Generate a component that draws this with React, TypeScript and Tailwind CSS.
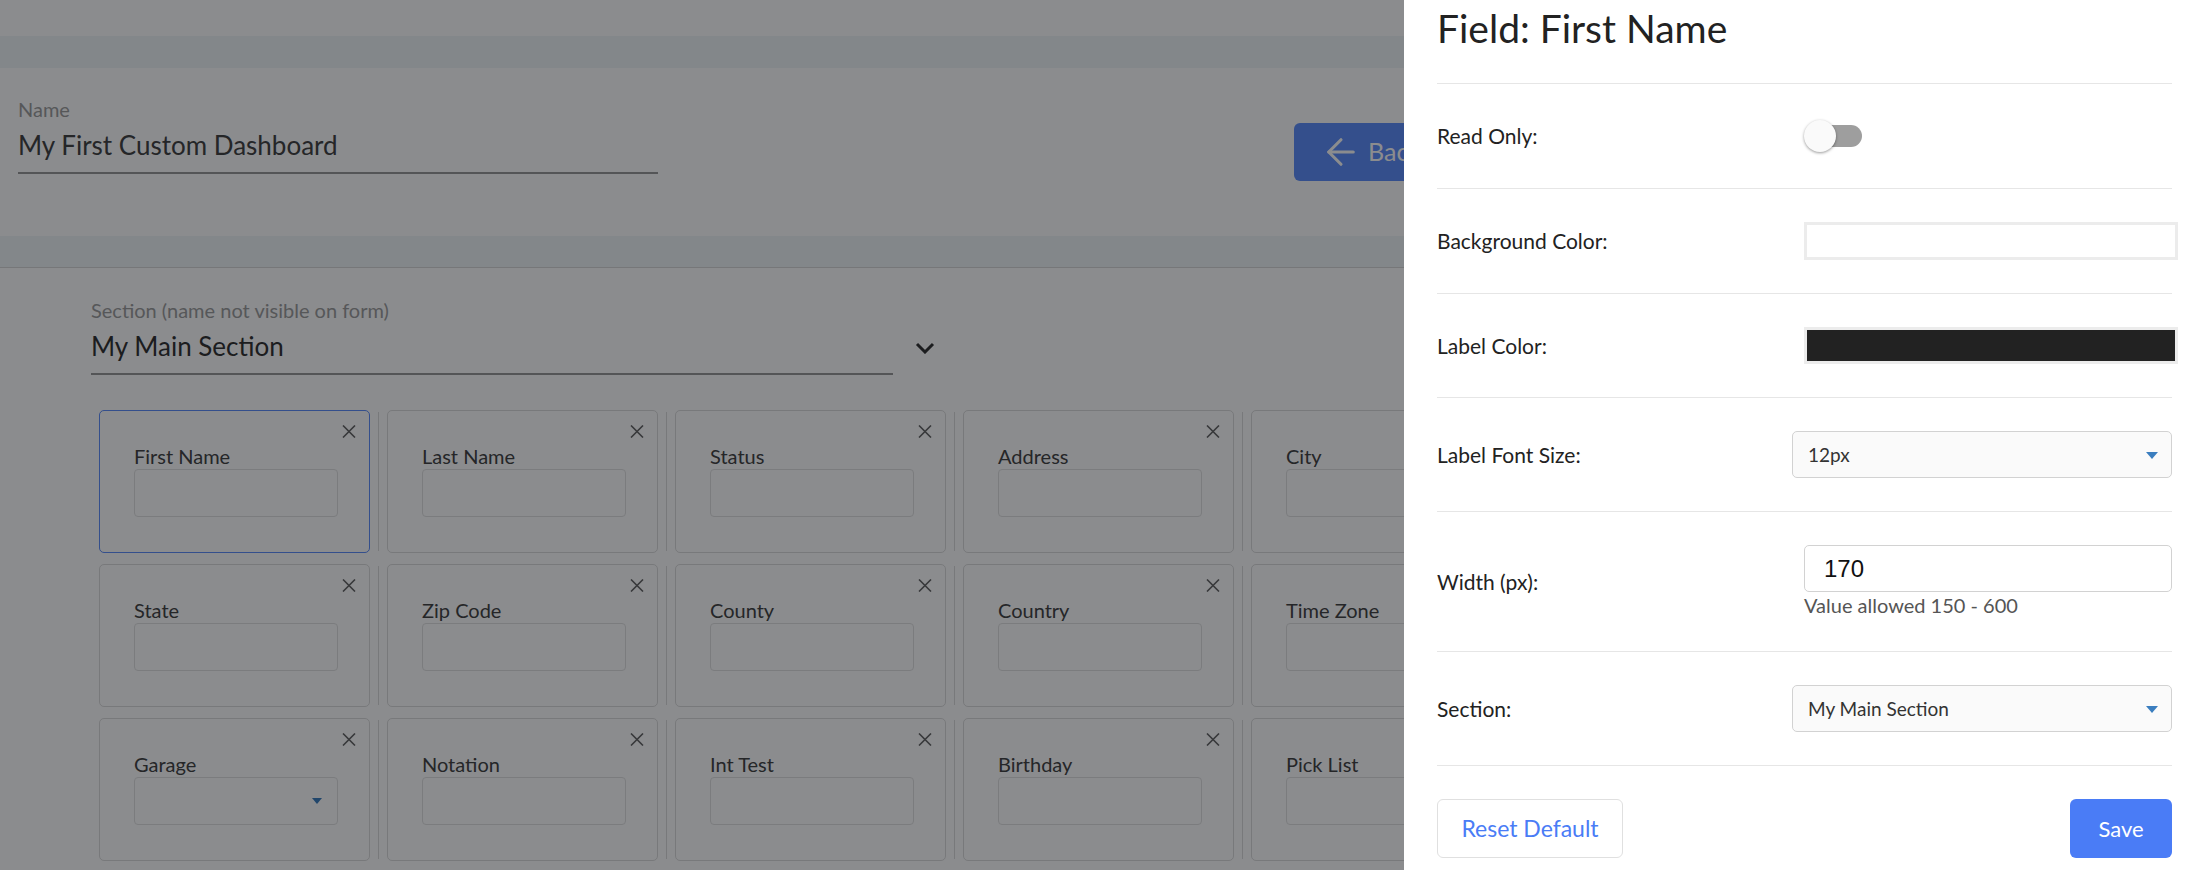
import { ArrowLeft } from "lucide-react";

const rows = [
  ["First Name", "Last Name", "Status", "Address", "City"],
  ["State", "Zip Code", "County", "Country", "Time Zone"],
  ["Garage", "Notation", "Int Test", "Birthday", "Pick List"],
];

function CloseX() {
  return (
    <svg width="14" height="13" viewBox="0 0 14 13" className="absolute right-[13px] top-[14px]">
      <path d="M1 0.5 L13 12.5 M13 0.5 L1 12.5" stroke="#666" strokeWidth="1.6" fill="none" />
    </svg>
  );
}

function Triangle({ className }: { className?: string }) {
  return (
    <svg width="12" height="7" viewBox="0 0 12 7" className={className}>
      <path d="M0 0 H12 L6 7 Z" fill="#3b7ebf" />
    </svg>
  );
}

function FieldCard({ label, selected, dropdown }: { label: string; selected?: boolean; dropdown?: boolean }) {
  return (
    <div
      className={
        "relative h-[143px] w-[271px] shrink-0 rounded-[5px] border bg-white pl-[34px] pt-[32px] " +
        (selected ? "border-[#5e8efc]" : "border-[#dcdcdc]")
      }
    >
      <CloseX />
      <div className="text-[20px] leading-[26px] text-[#444]">{label}</div>
      <div className="relative h-[48px] w-[204px] rounded-[4px] border border-[#e2e2e2]">
        {dropdown && <Triangle className="absolute right-[15px] top-[20px] h-[6px] w-[10px]" />}
      </div>
    </div>
  );
}

function Row({ label, children, last }: { label: string; children: React.ReactNode; last?: boolean }) {
  return (
    <div className={"flex items-center py-[33px] " + (last ? "" : "border-b border-[#e6e6e6]")}>
      <div className="w-[355px] shrink-0 text-[21px] text-[#222]">{label}</div>
      <div className="flex-1">{children}</div>
    </div>
  );
}

function SelectBox({ value }: { value: string }) {
  return (
    <div className="flex h-[47px] w-[380px] items-center justify-between rounded-[5px] border border-[#d2d2d2] bg-[#fafafa] pl-[15px] pr-[13px] pt-[2px] text-[19px] text-[#333]">
      <span>{value}</span>
      <Triangle />
    </div>
  );
}

export default function App() {
  return (
    <div className="relative h-[870px] w-[2190px] overflow-hidden bg-white font-['Lato',sans-serif]">
      {/* page under the overlay */}
      <div className="h-[36px] bg-white" />
      <div className="h-[32px] bg-[#f0f5f8]" />
      <div className="flex h-[168px] items-start pl-[18px]">
        <div className="w-[640px] pt-[29px]">
          <div className="text-[20px] leading-[25px] text-[#9e9e9e]">Name</div>
          <div className="mt-[7px] border-b-2 border-[#9a9a9a] pb-[10px] text-[26px] leading-[33px] text-[#444]">
            My First Custom Dashboard
          </div>
        </div>
        <button className="ml-[636px] mt-[55px] flex h-[58px] items-center gap-[6px] rounded-[6px] bg-[#5e8efc] pl-[26px] pr-[40px] text-[25px] text-white">
          <ArrowLeft className="h-[42px] w-[42px]" strokeWidth={1.8} />
          Back
        </button>
      </div>
      <div className="h-[32px] border-b border-[#d8d8d8] bg-[#f0f5f8]" />

      <div className="pl-[91px] pt-[30px]">
        <div className="text-[20px] leading-[25px] text-[#9e9e9e]">Section (name not visible on form)</div>
        <div className="mt-[6px] flex items-center gap-[22px]">
          <div className="w-[802px] border-b-2 border-[#9a9a9a] pb-[10px] text-[26px] leading-[34px] text-[#333]">
            My Main Section
          </div>
          <svg width="20" height="12" viewBox="0 0 20 12" className="mt-[-8px]">
            <path d="M2 2 L10 10 L18 2" stroke="#333" strokeWidth="3" fill="none" />
          </svg>
        </div>

        <div className="ml-[8px] mt-[35px] flex flex-col gap-y-[11px]">
          {rows.map((row, r) => (
            <div key={r} className="flex">
              {row.map((label, i) => (
                <div key={label} className="flex">
                  <FieldCard label={label} selected={r === 0 && i === 0} dropdown={label === "Garage"} />
                  <div className="mx-[8px] my-[2px] w-px self-stretch bg-[#dcdcdc]" />
                </div>
              ))}
            </div>
          ))}
        </div>
      </div>

      {/* dim overlay */}
      <div className="absolute inset-0 bg-[rgba(3,5,9,0.46)]" />

      {/* field settings drawer */}
      <aside className="absolute right-0 top-0 h-full w-[786px] bg-white pl-[33px] pr-[18px]">
        <div className="h-[84px] border-b border-[#e6e6e6] pt-[9px] text-[39px] leading-none text-[#222]">
          Field: First Name
        </div>

        <Row label="Read Only:">
          <div className="flex h-[38px] items-center pl-[12px]">
            <div className="relative h-[22px] w-[58px]">
              <div className="absolute left-[4px] top-0 h-[22px] w-[54px] rounded-full bg-[#9e9e9e]" />
              <div className="absolute left-0 top-[-5px] h-[32px] w-[32px] rounded-full bg-[#fafafa] shadow-[0_1px_3px_rgba(0,0,0,0.4)]" />
            </div>
          </div>
        </Row>

        <Row label="Background Color:">
          <div className="ml-[12px] h-[38px] w-[374px] border-[3px] border-[#ececec] bg-white" />
        </Row>

        <Row label="Label Color:">
          <div className="ml-[12px] h-[37px] w-[374px] border-[3px] border-[#ececec] bg-[#222]" />
        </Row>

        <Row label="Label Font Size:">
          <SelectBox value="12px" />
        </Row>

        <Row label="Width (px):">
          <div className="ml-[12px]">
            <div className="flex h-[47px] w-[368px] items-center rounded-[5px] border border-[#d2d2d2] bg-white pl-[19px] font-['Liberation_Sans',sans-serif] text-[24px] text-[#111]">
              170
            </div>
            <div className="text-[20px] leading-[26px] text-[#555]">Value allowed 150 - 600</div>
          </div>
        </Row>

        <Row label="Section:">
          <SelectBox value="My Main Section" />
        </Row>

        <div className="flex items-center justify-between pt-[33px]">
          <button className="h-[59px] w-[186px] rounded-[6px] border border-[#e0e0e0] bg-white text-[23px] text-[#4a7cf6]">
            Reset Default
          </button>
          <button className="h-[59px] w-[102px] rounded-[6px] bg-[#4a7cf6] text-[22px] text-white">Save</button>
        </div>
      </aside>
    </div>
  );
}
